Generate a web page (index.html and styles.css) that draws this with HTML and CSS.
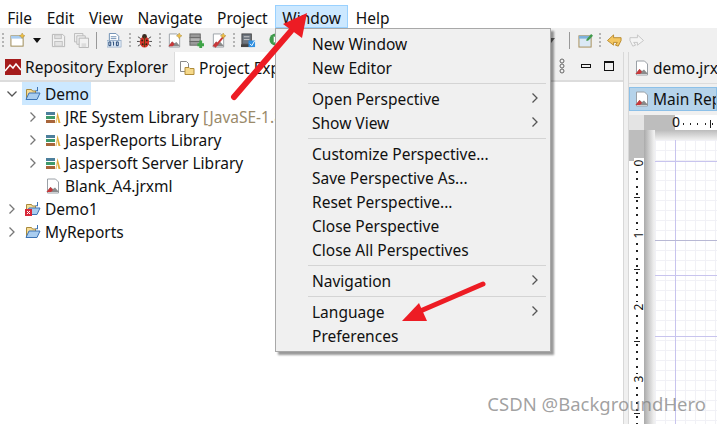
FILE: index.html
```html
<!DOCTYPE html>
<html lang="en">
<head>
<meta charset="utf-8">
<title>Window menu</title>
<link rel="stylesheet" href="styles.css">
</head>
<body>
<svg class="defs" width="0" height="0">
  <symbol id="folder" viewBox="0 0 16 16">
    <path d="M1.500 3.500h5l1 1.500h3v8.500h-9z" fill="#f6dc96" stroke="#a98a3c"/>
    <path d="M1 13.500l3-6.500h11l-3 6.500z" fill="#a9cdf0" stroke="#3c73b4"/>
    <path d="M12.500 1v4l-2-.5" fill="none" stroke="#3c73b4"/>
  </symbol>
  <symbol id="lib" viewBox="0 0 16 16">
    <rect x="1" y="3" width="9" height="3" fill="#4c7f9c"/>
    <rect x="1" y="7" width="9" height="3" fill="#3f9a6b"/>
    <rect x="1" y="11" width="9" height="3" fill="#a8653a"/>
    <path d="M10.500 14l2-11 3 11h-2l-1.500-6-.5 6z" fill="#e0a93a"/>
  </symbol>
  <symbol id="report" viewBox="0 0 16 16">
    <path d="M2.500 1h8l3 3v11h-11z" fill="#fff" stroke="#9aa0a6"/>
    <path d="M1.500 14l4-5 2.500 2 2-1.500 4 4.500z" fill="#8a8a8a"/>
    <path d="M1.500 14l4-5 2.500 3-2 2z" fill="#c8383a"/>
  </symbol>
  <symbol id="chev" viewBox="0 0 8 12">
    <path d="M1.500 1.500l4.500 4.500-4.500 4.500" fill="none" stroke="currentColor" stroke-width="1.300"/>
  </symbol>
</svg>

<nav class="menubar">
  <span class="menu-title">File</span>
  <span class="menu-title">Edit</span>
  <span class="menu-title">View</span>
  <span class="menu-title">Navigate</span>
  <span class="menu-title">Project</span>
  <span class="menu-title open">Window</span>
  <span class="menu-title">Help</span>
</nav>

<div class="toolbar">
  <div class="tool-group">
    <i class="grip"></i>
    <svg class="ti" viewBox="0 0 16 16"><rect x="1" y="3" width="13" height="11" fill="#fff" stroke="#9a8650"/><rect x="1" y="3" width="13" height="3" fill="#a9cdf0"/><path d="M13 0l1 2 2 1-2 1-1 2-1-2-2-1 2-1z" fill="#f0c040" stroke="#a98a3c" stroke-width=".5"/></svg>
    <i class="drop"></i>
    <svg class="ti save" viewBox="0 0 16 16"><path d="M1.500 1.500h11l2 2v11h-13z" fill="#f2f2f2" stroke="#b4b4b4"/><rect x="4" y="2" width="7" height="4" fill="#e0e0e0" stroke="#c0c0c0"/><rect x="4" y="9" width="8" height="5" fill="#e4e4e4" stroke="#c0c0c0"/></svg>
    <svg class="ti saveall" viewBox="0 0 16 16"><path d="M.5.500h9v9h-9z" fill="#eee" stroke="#bbb"/><path d="M3 3h9v9h-9z" fill="#eee" stroke="#bbb"/><path d="M5.500 5.500h10v10h-10z" fill="#f2f2f2" stroke="#b4b4b4"/><rect x="8" y="11" width="5" height="4" fill="#ddd"/></svg>
    <i class="sep"></i>
    <svg class="ti file010" viewBox="0 0 16 16"><path d="M2.500.5h7l3 3v5h-10z" fill="#fff" stroke="#6a8bb0"/><path d="M4 4h6M4 6h6" stroke="#6a8bb0"/><rect y="8" width="15" height="7" fill="#dfeaf5" stroke="#6a8bb0" stroke-width=".5"/><path d="M2 9.500h2v4h-2zM6 9.500h1v4M10 9.500h2v4h-2z" fill="none" stroke="#1c3f70"/></svg>
    <i class="grip gap-g"></i>
    <svg class="ti bug" viewBox="0 0 16 16"><path d="M1 4l3 2M15 4l-3 2M0 9h3M16 9h-3M1 14l3-2M15 14l-3-2" stroke="#444"/><ellipse cx="8" cy="9.500" rx="5" ry="6" fill="#d8352a"/><circle cx="8" cy="3.500" r="2.500" fill="#3a2a20"/><path d="M8 4v11" stroke="#541"/><circle cx="5.500" cy="8" r="1" fill="#321"/><circle cx="10.500" cy="8" r="1" fill="#321"/><circle cx="6" cy="12" r="1" fill="#321"/><circle cx="10" cy="12" r="1" fill="#321"/></svg>
    <i class="grip gap-g"></i>
    <svg class="ti t1" viewBox="0 0 16 16"><use href="#report"/><path d="M13 0l1 2 2 1-2 1-1 2-1-2-2-1 2-1z" fill="#f0c040" stroke="#a98a3c" stroke-width=".5"/></svg>
    <svg class="ti t2" viewBox="0 0 16 16"><rect x="1" y="1" width="11" height="4" fill="#9a9a9a" stroke="#666"/><rect x="1" y="5" width="11" height="4" fill="#b4b4b4" stroke="#666"/><rect x="1" y="9" width="11" height="4" fill="#9a9a9a" stroke="#666"/><path d="M11 8h3v3h2v3h-2v2h-3v-2h-2v-3h2z" fill="#3fa447"/></svg>
    <svg class="ti t3" viewBox="0 0 16 16"><use href="#report"/><path d="M4 15L14 3" stroke="#c8383a" stroke-width="2"/><path d="M13 0l1 2 2 1-2 1-1 2-1-2-2-1 2-1z" fill="#f0c040" stroke="#a98a3c" stroke-width=".5"/></svg>
    <i class="grip gap-g"></i>
    <svg class="ti t4" viewBox="0 0 16 16"><rect x="1" y="1" width="10" height="11" fill="#6e7680" stroke="#444"/><path d="M3 4h6M3 7h6" stroke="#ccc"/><rect y="12" width="12" height="3" fill="#444"/><path d="M8 8h7v7h-7z" fill="#2f8fe0"/><path d="M9.500 11.500l2 2 3-5" stroke="#fff" fill="none"/></svg>
    <svg class="ti t5" viewBox="0 0 16 16"><circle cx="7" cy="7" r="6.500" fill="#3f9a4a"/><path d="M5 3.500l6 3.500-6 3.500z" fill="#fff"/><circle cx="12.500" cy="13" r="3" fill="#d8352a"/></svg>
  </div>
  <div class="tool-group">
    <i class="drop grey"></i>
    <i class="sep"></i>
    <svg class="ti t6" viewBox="0 0 16 16"><rect x="1" y="3" width="13" height="12" fill="#dbe9f5" stroke="#a58c55"/><rect x="1" y="3" width="13" height="3" fill="#7fb2dc"/><path d="M9 7l5-6 2 2-5 5-2 .5z" fill="#3f9a4a"/></svg>
    <i class="grip gap-g2"></i>
    <svg class="ti back" viewBox="0 0 16 16"><path d="M.5 8L7 2v3h8v3l-3 6-3-1 2-3H7v3z" fill="#f4c660" stroke="#b88a2e"/></svg>
    <svg class="ti fwd" viewBox="0 0 16 16"><path d="M15.500 8L9 2v3H1v3l3 6 3-1-2-3h4v3z" fill="#f4f4f4" stroke="#c4c4c4"/></svg>
  </div>
</div>

<main class="workbench">
  <section class="left-pane">
    <div class="view-tabs">
      <div class="view-tab repo">
        <svg class="ic16" viewBox="0 0 16 16"><rect width="16" height="16" fill="#a51c1c"/><path d="M0 12l5-6 3 3 3-4 5 6" fill="none" stroke="#fff" stroke-width="1.500"/></svg>
        <span>Repository Explorer</span>
      </div>
      <div class="view-tab proj">
        <svg class="ic16" viewBox="0 0 16 16"><path d="M1.500 1.500h6l2 2v8h-8z" fill="#fff" stroke="#8a8a8a"/><path d="M6 7.500h4l1 1h4v6h-9z" fill="#f6d98a" stroke="#b08c3a"/></svg>
        <span>Project Explorer</span>
      </div>
      <div class="view-controls">
        <svg class="vc-menu" viewBox="0 0 6 16"><circle cx="3" cy="3" r="2" fill="none" stroke="#666"/><circle cx="3" cy="8" r="2" fill="none" stroke="#666"/><circle cx="3" cy="13" r="2" fill="none" stroke="#666"/></svg>
        <i class="vc-min"></i>
        <i class="vc-max"></i>
      </div>
    </div>
    <ul class="tree">
      <li class="row"><svg class="exp" viewBox="0 0 12 8"><path d="M1.500 1.500L6 6l4.500-4.500" fill="none" stroke="#555" stroke-width="1.300"/></svg><span class="sel"><svg class="ic16" viewBox="0 0 16 16"><use href="#folder"/></svg><span class="label">Demo</span></span></li>
      <li class="row child"><svg class="chev"><use href="#chev"/></svg><svg class="ic16" viewBox="0 0 16 16"><use href="#lib"/></svg><span class="label">JRE System Library <em>[JavaSE-1.8]</em></span></li>
      <li class="row child"><svg class="chev"><use href="#chev"/></svg><svg class="ic16" viewBox="0 0 16 16"><use href="#lib"/></svg><span class="label">JasperReports Library</span></li>
      <li class="row child"><svg class="chev"><use href="#chev"/></svg><svg class="ic16" viewBox="0 0 16 16"><use href="#lib"/></svg><span class="label">Jaspersoft Server Library</span></li>
      <li class="row child leaf"><svg class="ic16" viewBox="0 0 16 16"><use href="#report"/></svg><span class="label">Blank_A4.jrxml</span></li>
      <li class="row top"><svg class="chev"><use href="#chev"/></svg><svg class="ic16" viewBox="0 0 16 16"><use href="#folder"/><rect y="8" width="7" height="7" fill="#d8283a"/><path d="M2 10l3 3M5 10l-3 3" stroke="#fff"/></svg><span class="label">Demo1</span></li>
      <li class="row top"><svg class="chev"><use href="#chev"/></svg><svg class="ic16" viewBox="0 0 16 16"><use href="#folder"/></svg><span class="label">MyReports</span></li>
    </ul>
  </section>

  <section class="right-pane">
    <div class="editor-tab">
      <svg class="ic16" viewBox="0 0 16 16"><use href="#report"/></svg>
      <span class="clip">demo.jrxml</span>
    </div>
    <div class="sub-tab">
      <svg class="ic16" viewBox="0 0 16 16"><use href="#report"/></svg>
      <span class="clip">Main Report</span>
    </div>
    <div class="ruler-top">
      <i class="corner"></i>
      <div class="ruler-h"><i class="ruler-h-off"></i><span class="rh-zero">0</span><i class="rh-dots"></i></div>
    </div>
    <div class="design">
      <div class="ruler-v">
        <i class="ruler-v-off"></i>
        <div class="rv-scale">
          <span class="rv-num n0">0</span>
          <span class="rv-num n1">1</span>
          <span class="rv-num n2">2</span>
          <span class="rv-num n3">3</span>
        </div>
      </div>
      <div class="canvas">
        <div class="sheet">
          <i class="guide-v"></i>
          <i class="guide-h g1"></i>
          <i class="guide-h g2"></i>
          <i class="guide-h g3"></i>
          <i class="guide-h g4"></i>
        </div>
      </div>
    </div>
  </section>
</main>

<div class="popup">
  <div class="item">New Window</div>
  <div class="item">New Editor</div>
  <hr>
  <div class="item">Open Perspective<svg class="chev"><use href="#chev"/></svg></div>
  <div class="item">Show View<svg class="chev"><use href="#chev"/></svg></div>
  <hr>
  <div class="item">Customize Perspective...</div>
  <div class="item">Save Perspective As...</div>
  <div class="item">Reset Perspective...</div>
  <div class="item">Close Perspective</div>
  <div class="item">Close All Perspectives</div>
  <hr>
  <div class="item">Navigation<svg class="chev"><use href="#chev"/></svg></div>
  <hr>
  <div class="item">Language<svg class="chev"><use href="#chev"/></svg></div>
  <div class="item">Preferences</div>
</div>

<svg class="annot" viewBox="0 0 717 424">
  <path d="M234 97L291 31" stroke="#ed1c24" stroke-width="6" stroke-linecap="round"/>
  <path d="M307 13L283 24 302 38z" fill="#ed1c24"/>
  <path d="M483 284L418 312" stroke="#ed1c24" stroke-width="5" stroke-linecap="round"/>
  <path d="M402 321L419 303 427 321z" fill="#ed1c24"/>
</svg>

<div class="watermark">CSDN @BackgroundHero</div>
</body>
</html>
```
FILE: styles.css
```css
* { box-sizing: border-box; }
html, body { margin: 0; padding: 0; }
body {
  width: 717px; height: 424px; overflow: hidden; position: relative;
  display: flex; flex-direction: column;
  background: #f0f0f0; color: #111;
  font: 15.5px/20px "Noto Sans", sans-serif;
}
.defs { position: absolute; }
i { display: block; }

.menubar { height: 28px; padding: 5px 0 0; background: #fff; display: flex; flex: none; }
.menu-title { height: 23px; padding: 0 6.300px; line-height: 24px; border: 1px solid transparent; }
.menu-title.open { background: #cce8ff; border-color: #99d1ff; }

.toolbar { height: 24px; flex: none; padding: 0 73px 0 2px; display: flex; justify-content: space-between; align-items: center; background: #f0f0f0; }
.tool-group { display: flex; align-items: center; }
.ti { width: 15px; height: 15px; flex: none; display: block; }
.grip { width: 2px; height: 15px; background: repeating-linear-gradient(#b4b4b4 0 2px, transparent 2px 4px); }
.drop { width: 0; height: 0; margin: 0 10px 0 8px; border: 4.500px solid transparent; border-top: 5px solid #111; border-bottom: 0; }
.drop.grey { border-top-color: #666; margin: 0 7px 0 0; }
.sep { width: 1px; height: 17px; background: #999; margin: 0 10px 0 7px; }
.grip + .ti { margin-left: 6px; }
.saveall { margin-left: 8px; }
.gap-g { margin-left: 7px; }
.t2, .t3 { margin-left: 7px; }
.t4 { margin-left: 6px; }
.t5 { margin-left: 13px; }
.gap-g2 { margin-left: 6px; }
.fwd { margin-left: 7px; }
.t6 { margin-left: -2px; }

.workbench { flex: 1; display: flex; min-height: 0; gap: 4px; }
.left-pane { width: 624px; display: flex; flex-direction: column; background: #fff; border-right: 1px solid #d8d8d8; }
.view-tabs { height: 30px; display: flex; background: #f0f0f0; border-bottom: 2px solid #dcdcdc; flex: none; }
.view-tab { display: flex; align-items: center; gap: 4px; height: 30px; padding-top: 2px; white-space: nowrap; }
.repo { width: 175px; padding-left: 5px; border-right: 1px solid #dcdcdc; border-bottom: 2px solid #dcdcdc; }
.proj { width: 200px; padding-left: 4px; background: #fff; }
.ic16 { width: 16px; height: 16px; flex: none; display: block; }
.view-controls { margin-left: auto; display: flex; align-items: center; padding-right: 9px; height: 27px; }
.vc-menu { width: 6px; height: 16px; }
.vc-min { width: 10px; height: 4px; margin-left: 16px; border: 1px solid #111; }
.vc-max { width: 10px; height: 10px; margin-left: 13px; border: 1px solid #111; border-top-width: 2px; }

.tree { list-style: none; margin: 0; padding: 0; }
.row { height: 23px; display: flex; align-items: center; white-space: nowrap; }
.label { margin-left: 4px; }
.label em { font-style: normal; color: #9a8a6a; }
.chev { width: 8px; height: 12px; flex: none; color: #777; }
.exp { width: 12px; height: 8px; margin: 0 4px 0 6px; flex: none; }
.sel { display: flex; align-items: center; height: 23px; background: #cce8ff; padding: 0 2px 0 3px; }
.top { padding-left: 8px; }
.top .chev { margin-right: 9px; }
.child { padding-left: 29px; }
.child .chev { margin-right: 8px; }
.leaf { padding-left: 45px; }

.right-pane { flex: 1; min-width: 0; display: flex; flex-direction: column; overflow: hidden; border-left: 1px solid #d8d8d8; }
.clip { overflow: hidden; flex: 1; min-width: 0; }
.editor-tab { height: 32px; display: flex; align-items: center; gap: 3px; padding-left: 5px; white-space: nowrap; border-bottom: 1px solid #dcdcdc; flex: none; }
.sub-tab { height: 24px; margin-top: 3px; display: flex; align-items: center; gap: 3px; padding-left: 4px; white-space: nowrap; background: #b5d3ea; border: 1px solid #8cc0e8; flex: none; }
.ruler-top { height: 15px; margin-top: 4px; display: flex; flex: none; }
.corner { width: 15px; background: #e4e4e4; }
.ruler-h { flex: 1; background: #fff; display: flex; font-size: 14px; line-height: 14px; }
.ruler-h-off { width: 31px; background: #bdbdbd; }
.rh-zero { margin-left: -3px; }
.rh-dots { flex: 1; margin: 5px 0 2px 3px; background:
    linear-gradient(90deg, #222 1px, transparent 1px) no-repeat 27px 0 / 2px 100%,
    repeating-linear-gradient(90deg, #222 0 1px, transparent 1px 7.200px) 0 3px / 100% 2px no-repeat; }
.design { flex: 1; display: flex; min-height: 0; }
.ruler-v { width: 15px; flex: none; background: #fff; display: flex; flex-direction: column; }
.ruler-v-off { height: 31px; background: #bdbdbd; flex: none; }
.rv-scale { flex: 1; position: relative; background:
    repeating-linear-gradient(transparent 0 36px, #222 36px 37px, transparent 37px 72px) no-repeat 5px 0 / 6px 100%,
    repeating-linear-gradient(#fff 0 3px, #222 3px 5px, #fff 5px 7.200px) no-repeat 7px 0 / 2px 100%, #fff; }
.rv-num { position: absolute; right: 0; width: 10px; font-size: 12px; line-height: 10px; text-align: center; transform: rotate(-90deg); background: #fff; }
.n0 { top: -3px; }
.n1 { top: 69px; }
.n2 { top: 141px; }
.n3 { top: 213px; }
.canvas { flex: 1; padding: 10px 0 0 11px; background: linear-gradient(90deg, #aaa, #f0f0f0 10px) no-repeat 0 0 / 11px 100%, linear-gradient(#bbb, #f0f0f0 10px) no-repeat 0 0 / 100% 11px, #f0f0f0; }
.sheet { height: 100%; position: relative; background:
    repeating-linear-gradient(90deg, #f1f1f6 0 1px, transparent 1px 10px),
    repeating-linear-gradient(#f1f1f6 0 1px, transparent 1px 10px), #fff; }
.guide-v { position: absolute; left: 20px; top: 0; bottom: 0; width: 1px; background: #c8c4ee; }
.guide-h { position: absolute; left: 0; right: 0; height: 1px; background: #c8c4ee; }
.g1 { top: 21px; }
.g2 { top: 100px; background: #b8b8d4; }
.g3 { top: 135px; }
.g4 { top: 196px; }

.popup { position: absolute; left: 275px; top: 28px; width: 276px; padding: 3px 2px; background: #f0f0f0; border: 1px solid #a8a8a8; box-shadow: 3px 3px 2px rgba(0,0,0,.4); }
.item { height: 24px; padding-left: 34px; line-height: 25px; position: relative; white-space: nowrap; }
.item .chev { position: absolute; right: 9px; top: 5px; color: #555; }
.popup hr { height: 1px; margin: 3px 2px 3px 30px; border: 0; background: #d4d4d4; }

.annot { position: absolute; left: 0; top: 0; width: 717px; height: 424px; }
.watermark { position: absolute; right: 11px; top: 392px; font-size: 18.5px; line-height: 24px; color: rgba(120,120,120,.7); white-space: nowrap; }
```
